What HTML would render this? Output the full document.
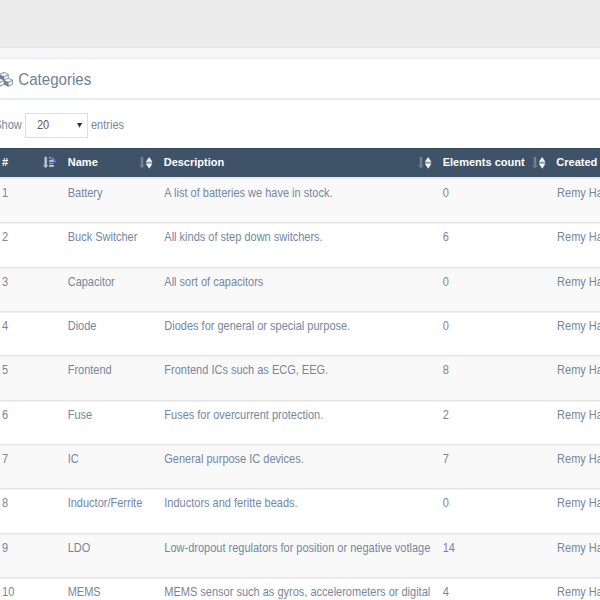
<!DOCTYPE html>
<html><head><meta charset="utf-8">
<style>
html,body{margin:0;padding:0;width:600px;height:600px;overflow:hidden;background:#fff;font-family:"Liberation Sans",sans-serif;}
.abs{position:absolute;}
#topbar{left:0;top:0;width:600px;height:47px;background:#ececec;}
#line1{left:0;top:47px;width:600px;height:1px;background:#e2e4e8;}
#band{left:0;top:48px;width:600px;height:9px;background:#f7f7f7;}
#line2{left:0;top:57px;width:600px;height:1px;background:#f1f2f4;border-bottom:1px solid #eceef1;}
#title{left:18.3px;top:70.7px;font-size:15.1px;transform:scaleY(1.13);transform-origin:0 14.23px;color:#6e819a;line-height:18px;white-space:nowrap;}
#hline{left:0;top:98px;width:600px;height:2px;background:#e9ecef;}
.t{position:absolute;white-space:nowrap;font-size:11px;line-height:15px;transform:scaleY(1.1);transform-origin:0 11.67px;color:#7686a0;}
#show{left:-5.8px;top:118px;}
#entries{left:91px;top:118px;}
#sel{left:25px;top:113px;width:61px;height:23px;border:1px solid #dedede;background:#fff;}
#sel20{left:37px;top:118px;color:#5a5a5a;}
#arrow{left:76.8px;top:123px;}
#thead{left:0;top:148px;width:600px;height:29px;background:#3f5368;}
#thead-top{left:0;top:148px;width:600px;height:1px;background:#37495c;}
#thead-bot{left:0;top:177px;width:600px;height:2px;background:#e9e9e9;}
.th{position:absolute;white-space:nowrap;font-size:11px;font-weight:bold;line-height:15px;color:#fff;top:154.5px;}
.row{position:absolute;left:0;width:600px;}
.odd{background:#f9f9f9;}
.even{background:#fff;}
.rb{position:absolute;left:0;width:600px;height:1px;background:#e5e5e5;box-shadow:0 1px 0 #f0f0f0;}
</style></head><body>
<div class="abs" id="topbar"></div>
<div class="abs" id="line1"></div>
<div class="abs" id="band"></div>
<div class="abs" id="line2"></div>
<svg class="abs" style="left:-4.8px;top:71.8px" width="17.97" height="14.8" viewBox="0 0 2176 1792"><path fill="#6e819a" stroke="#fff" stroke-width="30" d="M640 1632l384-192v-314l-384 164v342zm-64-454l404-173-404-173-404 173zm1088 454l384-192v-314l-384 164v342zm-64-454l404-173-404-173-404 173zm-448-293l384-165v-266l-384 164v267zm-64-379l441-189-441-189-441 189zm1088 518v416q0 36-19 67t-52 47l-448 224q-25 14-57 14t-57-14l-448-224q-4-2-7-4-2 2-7 4l-448 224q-25 14-57 14t-57-14l-448-224q-33-16-52-47t-19-67v-416q0-38 21.5-70t56.5-48l434-186v-400q0-38 21.5-70t56.5-48l448-192q23-10 50-10t50 10l448 192q35 16 56.5 48t21.5 70v400l434 186q36 16 57 48t21 70z"/></svg>
<div class="abs" id="title">Categories</div>
<div class="abs" id="hline"></div>
<div class="t" id="show">Show</div>
<div class="abs" id="sel"></div>
<div class="t" id="sel20">20</div>
<svg class="abs" id="arrow" width="5.2" height="4.8" viewBox="0 0 5.2 4.8"><polygon points="0,0 5.2,0 2.6,4.8" fill="#333"/></svg>
<div class="t" id="entries">entries</div>

<div class="abs" id="thead"></div>
<div class="abs" id="thead-top"></div>
<div class="abs" id="thead-bot"></div>
<svg class="abs" style="left:42.8px;top:156px" width="14" height="13" viewBox="0 0 14 13"><rect x="1.4" y="0.8" width="2.6" height="8.4" fill="#b5bdc5"/><polygon points="0,9 5.4,9 2.7,12.2" fill="#b5bdc5"/><rect x="6.2" y="1.2" width="1.8" height="1.3" fill="#b8c0c8"/><rect x="6.2" y="7.2" width="4" height="1" fill="#b0b8c2"/><rect x="6.2" y="9" width="4.7" height="2" fill="#b8c0c8"/><polygon points="6.7,6.2 13.2,6.2 9.9,1" fill="#7c7ae2"/><rect x="6.2" y="4" width="4" height="2" fill="#c4c4ee" fill-opacity="0.85"/></svg><svg class="abs" style="left:139.3px;top:156px" width="14" height="13" viewBox="0 0 14 13"><rect x="1.8" y="0.9" width="2.4" height="8.6" fill="#73828f"/><polygon points="0.1,9.2 5.9,9.2 3,12.2" fill="#73828f"/><rect x="7.2" y="5.5" width="5.9" height="2.4" fill="#9aa3ad"/><polygon points="6.9,5.8 13.4,5.8 10.15,0.9" fill="#f2f2f2"/><polygon points="6.9,7.7 13.4,7.7 10.15,12.8" fill="#f2f2f2"/></svg><svg class="abs" style="left:417.8px;top:156px" width="14" height="13" viewBox="0 0 14 13"><rect x="1.8" y="0.9" width="2.4" height="8.6" fill="#73828f"/><polygon points="0.1,9.2 5.9,9.2 3,12.2" fill="#73828f"/><rect x="7.2" y="5.5" width="5.9" height="2.4" fill="#9aa3ad"/><polygon points="6.9,5.8 13.4,5.8 10.15,0.9" fill="#f2f2f2"/><polygon points="6.9,7.7 13.4,7.7 10.15,12.8" fill="#f2f2f2"/></svg><svg class="abs" style="left:531.8px;top:156px" width="14" height="13" viewBox="0 0 14 13"><rect x="1.8" y="0.9" width="2.4" height="8.6" fill="#73828f"/><polygon points="0.1,9.2 5.9,9.2 3,12.2" fill="#73828f"/><rect x="7.2" y="5.5" width="5.9" height="2.4" fill="#9aa3ad"/><polygon points="6.9,5.8 13.4,5.8 10.15,0.9" fill="#f2f2f2"/><polygon points="6.9,7.7 13.4,7.7 10.15,12.8" fill="#f2f2f2"/></svg>
<div class="th" style="left:2px">#</div>
<div class="th" style="left:67.8px">Name</div>
<div class="th" style="left:163.7px">Description</div>
<div class="th" style="left:442.7px">Elements count</div>
<div class="th" style="left:556.3px">Created</div>

<div id="rows">
<div class="row odd" style="top:179.00px;height:43.200px"></div>
<div class="t" style="left:2.1px;top:185.80px">1</div>
<div class="t" style="left:67.7px;top:185.80px">Battery</div>
<div class="t" style="left:164.3px;top:185.80px">A list of batteries we have in stock.</div>
<div class="t" style="left:442.7px;top:185.80px">0</div>
<div class="t" style="left:557.1px;top:185.80px">Remy Hammer</div>
<div class="row even" style="top:222.20px;height:44.375px"></div>
<div class="rb" style="top:222.20px"></div>
<div class="t" style="left:2.1px;top:230.18px">2</div>
<div class="t" style="left:67.7px;top:230.18px">Buck Switcher</div>
<div class="t" style="left:164.3px;top:230.18px">All kinds of step down switchers.</div>
<div class="t" style="left:442.7px;top:230.18px">6</div>
<div class="t" style="left:557.1px;top:230.18px">Remy Hammer</div>
<div class="row odd" style="top:266.57px;height:44.375px"></div>
<div class="rb" style="top:266.57px"></div>
<div class="t" style="left:2.1px;top:274.55px">3</div>
<div class="t" style="left:67.7px;top:274.55px">Capacitor</div>
<div class="t" style="left:164.3px;top:274.55px">All sort of capacitors</div>
<div class="t" style="left:442.7px;top:274.55px">0</div>
<div class="t" style="left:557.1px;top:274.55px">Remy Hammer</div>
<div class="row even" style="top:310.95px;height:44.375px"></div>
<div class="rb" style="top:310.95px"></div>
<div class="t" style="left:2.1px;top:318.93px">4</div>
<div class="t" style="left:67.7px;top:318.93px">Diode</div>
<div class="t" style="left:164.3px;top:318.93px">Diodes for general or special purpose.</div>
<div class="t" style="left:442.7px;top:318.93px">0</div>
<div class="t" style="left:557.1px;top:318.93px">Remy Hammer</div>
<div class="row odd" style="top:355.32px;height:44.375px"></div>
<div class="rb" style="top:355.32px"></div>
<div class="t" style="left:2.1px;top:363.30px">5</div>
<div class="t" style="left:67.7px;top:363.30px">Frontend</div>
<div class="t" style="left:164.3px;top:363.30px">Frontend ICs such as ECG, EEG.</div>
<div class="t" style="left:442.7px;top:363.30px">8</div>
<div class="t" style="left:557.1px;top:363.30px">Remy Hammer</div>
<div class="row even" style="top:399.70px;height:44.375px"></div>
<div class="rb" style="top:399.70px"></div>
<div class="t" style="left:2.1px;top:407.68px">6</div>
<div class="t" style="left:67.7px;top:407.68px">Fuse</div>
<div class="t" style="left:164.3px;top:407.68px">Fuses for overcurrent protection.</div>
<div class="t" style="left:442.7px;top:407.68px">2</div>
<div class="t" style="left:557.1px;top:407.68px">Remy Hammer</div>
<div class="row odd" style="top:444.07px;height:44.375px"></div>
<div class="rb" style="top:444.07px"></div>
<div class="t" style="left:2.1px;top:452.05px">7</div>
<div class="t" style="left:67.7px;top:452.05px">IC</div>
<div class="t" style="left:164.3px;top:452.05px">General purpose IC devices.</div>
<div class="t" style="left:442.7px;top:452.05px">7</div>
<div class="t" style="left:557.1px;top:452.05px">Remy Hammer</div>
<div class="row even" style="top:488.45px;height:44.375px"></div>
<div class="rb" style="top:488.45px"></div>
<div class="t" style="left:2.1px;top:496.43px">8</div>
<div class="t" style="left:67.7px;top:496.43px">Inductor/Ferrite</div>
<div class="t" style="left:164.3px;top:496.43px">Inductors and feritte beads.</div>
<div class="t" style="left:442.7px;top:496.43px">0</div>
<div class="t" style="left:557.1px;top:496.43px">Remy Hammer</div>
<div class="row odd" style="top:532.83px;height:44.375px"></div>
<div class="rb" style="top:532.83px"></div>
<div class="t" style="left:2.1px;top:540.80px">9</div>
<div class="t" style="left:67.7px;top:540.80px">LDO</div>
<div class="t" style="left:164.3px;top:540.80px">Low-dropout regulators for position or negative votlage</div>
<div class="t" style="left:442.7px;top:540.80px">14</div>
<div class="t" style="left:557.1px;top:540.80px">Remy Hammer</div>
<div class="row even" style="top:577.20px;height:44.375px"></div>
<div class="rb" style="top:577.20px"></div>
<div class="t" style="left:2.1px;top:585.17px">10</div>
<div class="t" style="left:67.7px;top:585.17px">MEMS</div>
<div class="t" style="left:164.3px;top:585.17px">MEMS sensor such as gyros, accelerometers or digital</div>
<div class="t" style="left:442.7px;top:585.17px">4</div>
<div class="t" style="left:557.1px;top:585.17px">Remy Hammer</div>
</div>
</body></html>
